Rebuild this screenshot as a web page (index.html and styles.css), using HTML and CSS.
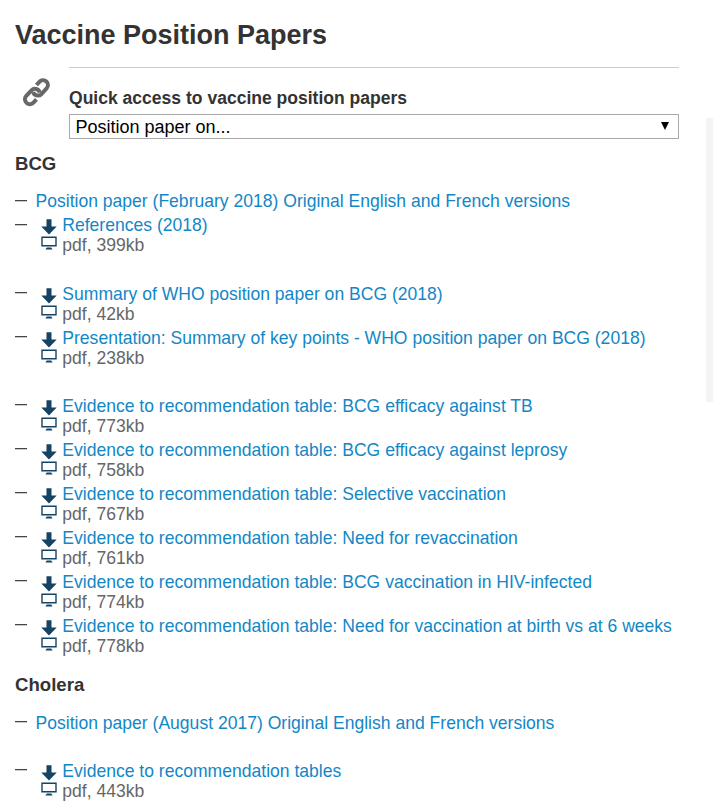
FILE: index.html
```
<!DOCTYPE html>
<html lang="en">
<head>
    <meta charset="UTF-8">
    <meta name="viewport" content="width=device-width, initial-scale=1.0">
    <title>Vaccine Position Papers</title>
    <link rel="stylesheet" href="styles.css">
</head>
<body>
    <!-- Icons shared by the document rows -->
    <svg class="defs">
        <symbol id="download" viewBox="0 0 16 16">
            <path d="M5.5 0.3h5v7.2h5.2L8 15.5 0.3 7.5h5.2z"/>
        </symbol>
        <symbol id="screen" viewBox="0 0 16 14">
            <path fill-rule="evenodd" d="M0.3 0.5h15.4v10H0.3zM1.7 1.9v7.2h12.6V1.9zM5.8 11.6h4.4L11.6 13.5H4.4z"/>
        </symbol>
    </svg>

    <div class="page">
        <main>
            <h1>Vaccine Position Papers</h1>

            <div class="quick-access">
                <svg class="link-icon" viewBox="0 0 30 32">
                    <g fill="none" stroke="#686868" stroke-width="4">
                        <path transform="translate(18.7 10.6) rotate(43)" d="M-4.9 1V-3.4A4.9 4.9 0 0 1 4.9 -3.4V4.2A4.9 4.9 0 0 1 -2.6 8.3"/>
                        <path transform="translate(10.2 19.8) rotate(223)" d="M-4.9 1V-3.4A4.9 4.9 0 0 1 4.9 -3.4V4.2A4.9 4.9 0 0 1 -2.6 8.3"/>
                    </g>
                </svg>
                <div class="quick-form">
                    <h3>Quick access to vaccine position papers</h3>
                    <div class="select">
                        <span>Position paper on...</span>
                        <svg class="caret" viewBox="0 0 8 8"><path d="M0 0h8L4 8z"/></svg>
                    </div>
                </div>
            </div>

            <h3 class="disease">BCG</h3>
            <ul class="lead">
                <li><a href="#">Position paper (February 2018) Original English and French versions</a></li>
                <li class="doc">
                    <div class="icons"><svg class="download"><use href="#download"/></svg><svg class="screen"><use href="#screen"/></svg></div>
                    <div><a href="#">References (2018)</a><span>pdf, 399kb</span></div>
                </li>
            </ul>
            <ul class="summaries">
                <li class="doc">
                    <div class="icons"><svg class="download"><use href="#download"/></svg><svg class="screen"><use href="#screen"/></svg></div>
                    <div><a href="#">Summary of WHO position paper on BCG (2018)</a><span>pdf, 42kb</span></div>
                </li>
                <li class="doc">
                    <div class="icons"><svg class="download"><use href="#download"/></svg><svg class="screen"><use href="#screen"/></svg></div>
                    <div><a href="#">Presentation: Summary of key points - WHO position paper on BCG (2018)</a><span>pdf, 238kb</span></div>
                </li>
            </ul>
            <ul>
                <li class="doc">
                    <div class="icons"><svg class="download"><use href="#download"/></svg><svg class="screen"><use href="#screen"/></svg></div>
                    <div><a href="#">Evidence to recommendation table: BCG efficacy against TB</a><span>pdf, 773kb</span></div>
                </li>
                <li class="doc">
                    <div class="icons"><svg class="download"><use href="#download"/></svg><svg class="screen"><use href="#screen"/></svg></div>
                    <div><a href="#">Evidence to recommendation table: BCG efficacy against leprosy</a><span>pdf, 758kb</span></div>
                </li>
                <li class="doc">
                    <div class="icons"><svg class="download"><use href="#download"/></svg><svg class="screen"><use href="#screen"/></svg></div>
                    <div><a href="#">Evidence to recommendation table: Selective vaccination</a><span>pdf, 767kb</span></div>
                </li>
                <li class="doc">
                    <div class="icons"><svg class="download"><use href="#download"/></svg><svg class="screen"><use href="#screen"/></svg></div>
                    <div><a href="#">Evidence to recommendation table: Need for revaccination</a><span>pdf, 761kb</span></div>
                </li>
                <li class="doc">
                    <div class="icons"><svg class="download"><use href="#download"/></svg><svg class="screen"><use href="#screen"/></svg></div>
                    <div><a href="#">Evidence to recommendation table: BCG vaccination in HIV-infected</a><span>pdf, 774kb</span></div>
                </li>
                <li class="doc">
                    <div class="icons"><svg class="download"><use href="#download"/></svg><svg class="screen"><use href="#screen"/></svg></div>
                    <div><a href="#">Evidence to recommendation table: Need for vaccination at birth vs at 6 weeks</a><span>pdf, 778kb</span></div>
                </li>
            </ul>

            <h3 class="disease">Cholera</h3>
            <ul>
                <li><a href="#">Position paper (August 2017) Original English and French versions</a></li>
            </ul>
            <ul>
                <li class="doc">
                    <div class="icons"><svg class="download"><use href="#download"/></svg><svg class="screen"><use href="#screen"/></svg></div>
                    <div><a href="#">Evidence to recommendation tables</a><span>pdf, 443kb</span></div>
                </li>
            </ul>
        </main>
        <aside></aside>
    </div>
</body>
</html>
```
FILE: styles.css
```
* {
    box-sizing: border-box;
}

body {
    margin: 0;
    background: #fff;
    color: #333;
    font-family: "Liberation Sans", Arial, sans-serif;
    font-size: 17.56px;
    line-height: 20px;
    overflow: hidden;
}

.defs {
    display: none;
}

.page {
    display: flex;
    justify-content: space-between;
    height: 811px;
}

main {
    width: 679px;
    padding: 19px 0 0 15px;
    white-space: nowrap;
}

/* grey edge of the side column */
aside {
    width: 7px;
    height: 284px;
    margin-top: 118px;
    background: #f4f4f4;
}

h1 {
    margin: 0;
    font-size: 27px;
    line-height: 32px;
}

h3 {
    margin: 0;
    font-size: 17.55px;
    line-height: 20px;
}

/* QUICK ACCESS */
.quick-access {
    display: flex;
    margin-top: 16px;
}

.link-icon {
    width: 30px;
    height: 32px;
    margin: 10px 17px 0 7px;
}

.quick-form {
    flex: 1;
    border-top: 1px solid #ccc;
    padding-top: 20px;
}

.select {
    display: flex;
    justify-content: space-between;
    height: 25px;
    margin-top: 6px;
    padding: 2px 9px 0 5.5px;
    border: 1px solid #a9a9a9;
    color: #000;
    font-size: 18px;
}

.caret {
    width: 8px;
    height: 8px;
    margin-top: 5px;
}

/* LISTS */
.disease {
    margin: 15px 0 17px;
    font-size: 18.6px;
}

ul {
    margin: 0;
    padding: 0;
    list-style: none;
}

ul + ul {
    margin-top: 24px;
}

ul + .summaries {
    margin-top: 25px;
}

ul + .disease {
    margin-bottom: 18px;
}

li {
    display: flex;
    padding-bottom: 4px;
}

li::before {
    content: "";
    flex: none;
    width: 12px;
    height: 1px;
    margin: 8px 8.5px 0 0;
    background: #444;
    box-shadow: 0 1px #ccc;
}

.lead li::before {
    margin-top: 9px;
}

a {
    color: #1387c6;
    text-decoration: none;
}

.doc a,
.doc span {
    display: block;
}

.doc span {
    color: #666;
}

.icons {
    flex: none;
    width: 16px;
    margin: 4px 5.8px 0 5px;
    fill: #154363;
}

.icons svg {
    display: block;
    width: 16px;
}

.download {
    height: 16px;
}

.screen {
    height: 14px;
    margin-top: 1px;
}
```
